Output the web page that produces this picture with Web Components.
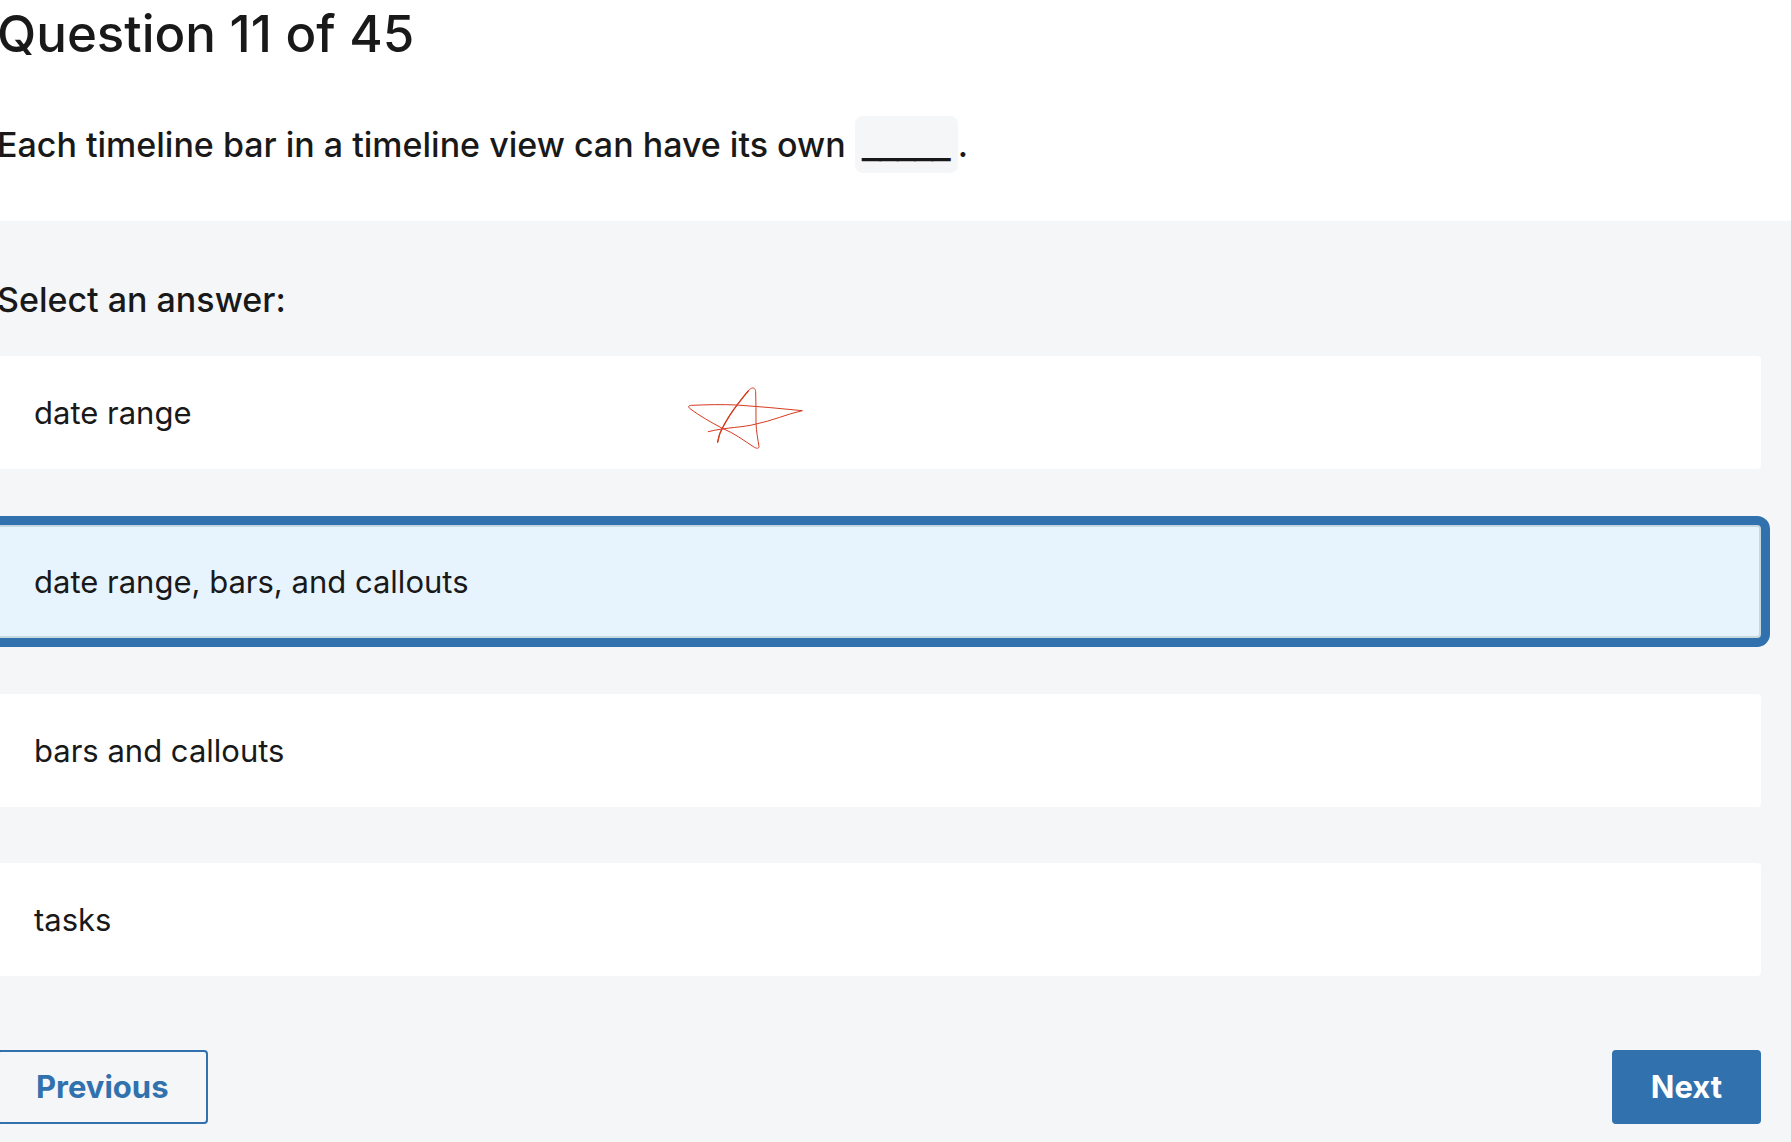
<!DOCTYPE html>
<html lang="en">
<head>
<meta charset="utf-8">
<meta name="viewport" content="width=device-width, initial-scale=1">
<title>Question 11 of 45</title>
<style>
	body {
		margin: 0;
		background: #f4f6f8;
		color: #191919;
		font-family: Inter, "Liberation Sans", sans-serif;
		font-weight: 500;
		overflow-x: hidden;
	}
</style>
</head>
<body>
<quiz-page>
	<quiz-question slot="question" heading="Question 11 of 45">
		Each timeline bar in a timeline view can have its own <code>_____</code>.
	</quiz-question>
	<quiz-answers slot="answers"></quiz-answers>
	<quiz-button slot="actions">Previous</quiz-button>
	<quiz-button slot="actions" primary>Next</quiz-button>
</quiz-page>

<script>
class QuizPage extends HTMLElement {
	constructor() {
		super();

		this.attachShadow({ mode: "open" });
		this.shadowRoot.append(QuizPage.template.content.cloneNode(true));
	}
}

QuizPage.template = document.createElement("template");
QuizPage.template.innerHTML = `
<style>
	:host {
		display: flex;
		flex-direction: column;
		min-height: 100vh;
		margin-left: -3px;
	}

	header {
		background: #ffffff;
	}

	main {
		flex: 1;
		padding: 56px 30px 18px 0;
	}

	nav {
		display: flex;
		justify-content: space-between;
		margin-top: 74px;
	}
</style>

<header><slot name="question"></slot></header>
<main>
	<slot name="answers"></slot>
	<nav><slot name="actions"></slot></nav>
</main>
`;

customElements.define("quiz-page", QuizPage);

class QuizQuestion extends HTMLElement {
	constructor() {
		super();

		this.attachShadow({ mode: "open" });
		this.shadowRoot.append(QuizQuestion.template.content.cloneNode(true));
	}

	connectedCallback() {
		this.shadowRoot.querySelector("h1").textContent = this.getAttribute("heading");
	}
}

QuizQuestion.template = document.createElement("template");
QuizQuestion.template.innerHTML = `
<style>
	:host {
		display: block;
		padding-bottom: 48px;
	}

	h1 {
		margin: 0 0 48px;
		font-size: 51px;
		font-weight: inherit;
		line-height: 68px;
	}

	p {
		margin: 0;
		font-size: 34px;
		line-height: 57px;
	}

	::slotted(code) {
		padding: 17px 8px 7px;
		border-radius: 8px;
		background: #f4f6f8;
		font-family: "Liberation Mono", monospace;
		font-size: 29px;
		line-height: 1;
		-webkit-text-stroke: 2px currentColor;
	}
</style>

<h1></h1>
<p><slot></slot></p>
`;

customElements.define("quiz-question", QuizQuestion);

// All radios share one shadow root, so the browser groups them by name
class QuizAnswers extends HTMLElement {
	constructor() {
		super();

		this.attachShadow({ mode: "open" });
		this.shadowRoot.append(QuizAnswers.template.content.cloneNode(true));
	}
}

QuizAnswers.template = document.createElement("template");
QuizAnswers.template.innerHTML = `
<style>
	:host {
		display: block;
	}

	fieldset {
		min-width: 0;
		margin: 0;
		padding: 0;
		border: 0;
	}

	legend {
		padding: 0;
		margin-bottom: 34px;
		font-size: 34px;
		line-height: 45px;
	}

	.options {
		display: flex;
		flex-direction: column;
		gap: 56px;
	}

	label {
		display: flex;
		align-items: center;
		position: relative;
		padding: 32px 37px;
		border-radius: 4px;
		background: #ffffff;
		font-size: 31px;
		font-weight: 400;
		line-height: 49px;
		cursor: pointer;
	}

	label:has(input:checked) {
		background: #e8f4fd;
		outline: 9px solid #3071ae;
		box-shadow: inset 0 1px #c8d5e0, inset 0 0 0 2px #c8d8df;
	}

	input {
		appearance: none;
		width: 0;
		height: 0;
		margin: 0;
		outline: none;
	}

	svg {
		position: absolute;
		left: 38.1%;
		top: 13px;
		width: 150px;
		height: 100px;
		fill: none;
		stroke: #d63b20;
		stroke-width: 3;
		stroke-linecap: round;
		stroke-linejoin: round;
		pointer-events: none;
	}
</style>

<fieldset>
	<legend>Select an answer:</legend>
	<div class="options">
		<label>
			<input type="radio" name="answer" value="range">
			<span>date range</span>
			<svg viewBox="0 0 450 300" aria-hidden="true">
				<path d="M146 220C148 203 154 188 160 177C172 154 187 130 204 108C220 87 234 67 245 59C251 55 259 56 260 68C261 99 261 133 261 164C262 188 267 213 270 233C269 240 262 238 256 235C224 214 195 192 160 178C126 160 91 140 63 119C56 113 58 110 67 109C113 107 159 106 204 108C270 113 335 118 400 125C354 135 308 156 261 165C222 176 174 174 118 188"/>
				<path d="M146 219C149 200 156 184 162 174C174 151 190 127 205 107C217 93 227 78 238 66" stroke-width="4"/>
			</svg>
		</label>
		<label>
			<input type="radio" name="answer" value="range-bars-callouts" checked>
			<span>date range, bars, and callouts</span>
		</label>
		<label>
			<input type="radio" name="answer" value="bars-callouts">
			<span>bars and callouts</span>
		</label>
		<label>
			<input type="radio" name="answer" value="tasks">
			<span>tasks</span>
		</label>
	</div>
</fieldset>
`;

customElements.define("quiz-answers", QuizAnswers);

class QuizButton extends HTMLElement {
	constructor() {
		super();

		this.attachShadow({ mode: "open" });
		this.shadowRoot.append(QuizButton.template.content.cloneNode(true));
	}
}

QuizButton.template = document.createElement("template");
QuizButton.template.innerHTML = `
<style>
	:host {
		display: block;
	}

	button {
		display: block;
		padding: 15px 37px;
		border: 2px solid #3071ae;
		border-radius: 4px;
		background: transparent;
		color: #3071ae;
		font: inherit;
		font-size: 31px;
		font-weight: 700;
		line-height: 40px;
		cursor: pointer;
	}

	:host([primary]) button {
		background: #3071ae;
		color: #ffffff;
	}
</style>

<button type="button"><slot></slot></button>
`;

customElements.define("quiz-button", QuizButton);
</script>
</body>
</html>
